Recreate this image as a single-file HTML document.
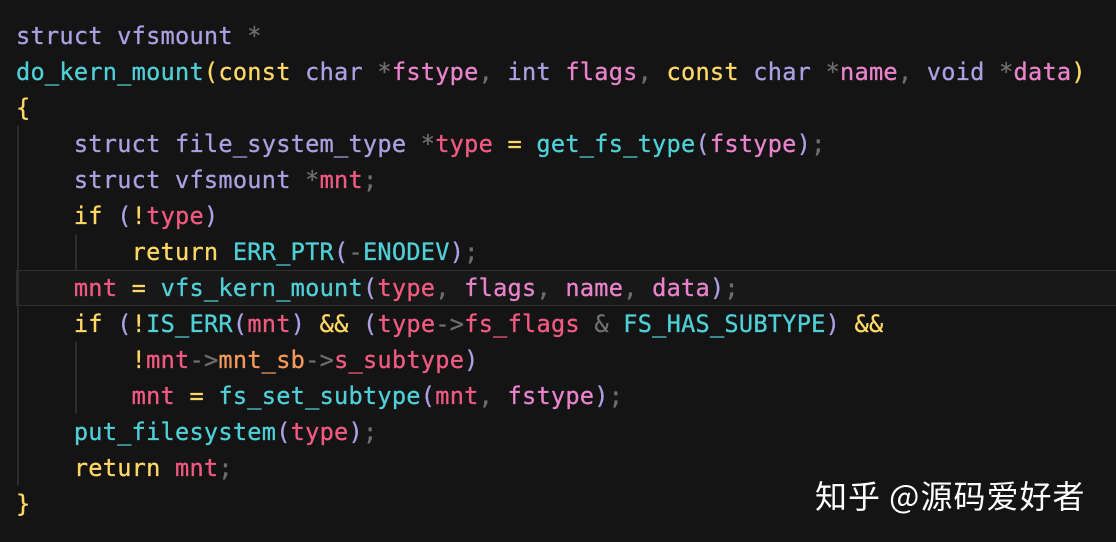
<!DOCTYPE html>
<html><head><meta charset="utf-8"><style>
html,body{margin:0;padding:0;background:#141414;width:1116px;height:542px;overflow:hidden}
#c{position:absolute;left:16px;top:18px;font-family:"DejaVu Sans Mono","Liberation Mono",monospace;font-size:23.6px;letter-spacing:0.25px;line-height:36px;white-space:pre;color:#a9a1e1;-webkit-text-stroke:0.3px}
.l{height:36px}
.k{color:#a9a1e1}.f{color:#4fd0d8}.y{color:#ffd866}.p{color:#e883cc}.r{color:#f25a82}.g{color:#6e6e6e}.o{color:#f39a5c}
.guide{position:absolute;width:2px;background:#2c2c2c}
#hl{position:absolute;left:16px;top:270px;width:1100px;height:34px;border:1px solid #2e2e2e;border-right:none;background:#181818}
#wm{position:absolute;left:815px;top:472px;font-family:"Noto Sans CJK SC","WenQuanYi Zen Hei",sans-serif;font-size:32px;letter-spacing:1px;color:#fff;white-space:nowrap}
</style></head><body>
<div id="hl"></div>
<div class="guide" style="left:17px;top:126px;height:360px"></div>
<div class="guide" style="left:75px;top:234px;height:36px"></div>
<div class="guide" style="left:75px;top:342px;height:72px"></div>
<div id="c"><div class="l"><span class="k">struct vfsmount </span><span class="g">*</span></div><div class="l"><span class="f">do_kern_mount</span><span class="y">(const </span><span class="k">char </span><span class="g">*</span><span class="p">fstype</span><span class="g">, </span><span class="k">int </span><span class="p">flags</span><span class="g">, </span><span class="y">const </span><span class="k">char </span><span class="g">*</span><span class="p">name</span><span class="g">, </span><span class="k">void </span><span class="g">*</span><span class="p">data</span><span class="y">)</span></div><div class="l"><span class="y">{</span></div><div class="l">    <span class="k">struct file_system_type </span><span class="g">*</span><span class="r">type </span><span class="y">= </span><span class="f">get_fs_type</span><span class="k">(</span><span class="p">fstype</span><span class="k">)</span><span class="g">;</span></div><div class="l">    <span class="k">struct vfsmount </span><span class="g">*</span><span class="r">mnt</span><span class="g">;</span></div><div class="l">    <span class="y">if </span><span class="k">(</span><span class="y">!</span><span class="r">type</span><span class="k">)</span></div><div class="l">        <span class="y">return </span><span class="f">ERR_PTR</span><span class="k">(</span><span class="g">-</span><span class="f">ENODEV</span><span class="k">)</span><span class="g">;</span></div><div class="l">    <span class="r">mnt </span><span class="y">= </span><span class="f">vfs_kern_mount</span><span class="k">(</span><span class="r">type</span><span class="g">, </span><span class="p">flags</span><span class="g">, </span><span class="p">name</span><span class="g">, </span><span class="p">data</span><span class="k">)</span><span class="g">;</span></div><div class="l">    <span class="y">if </span><span class="k">(</span><span class="y">!</span><span class="f">IS_ERR</span><span class="k">(</span><span class="r">mnt</span><span class="k">) </span><span class="y">&amp;&amp; </span><span class="k">(</span><span class="r">type</span><span class="g">-&gt;</span><span class="r">fs_flags </span><span class="g">&amp; </span><span class="f">FS_HAS_SUBTYPE</span><span class="k">) </span><span class="y">&amp;&amp;</span></div><div class="l">        <span class="y">!</span><span class="r">mnt</span><span class="g">-&gt;</span><span class="o">mnt_sb</span><span class="g">-&gt;</span><span class="r">s_subtype</span><span class="k">)</span></div><div class="l">        <span class="r">mnt </span><span class="y">= </span><span class="f">fs_set_subtype</span><span class="k">(</span><span class="r">mnt</span><span class="g">, </span><span class="p">fstype</span><span class="k">)</span><span class="g">;</span></div><div class="l">    <span class="f">put_filesystem</span><span class="k">(</span><span class="r">type</span><span class="k">)</span><span class="g">;</span></div><div class="l">    <span class="y">return </span><span class="r">mnt</span><span class="g">;</span></div><div class="l"><span class="y">}</span></div></div>
<div id="wm">知乎 @源码爱好者</div>
</body></html>
